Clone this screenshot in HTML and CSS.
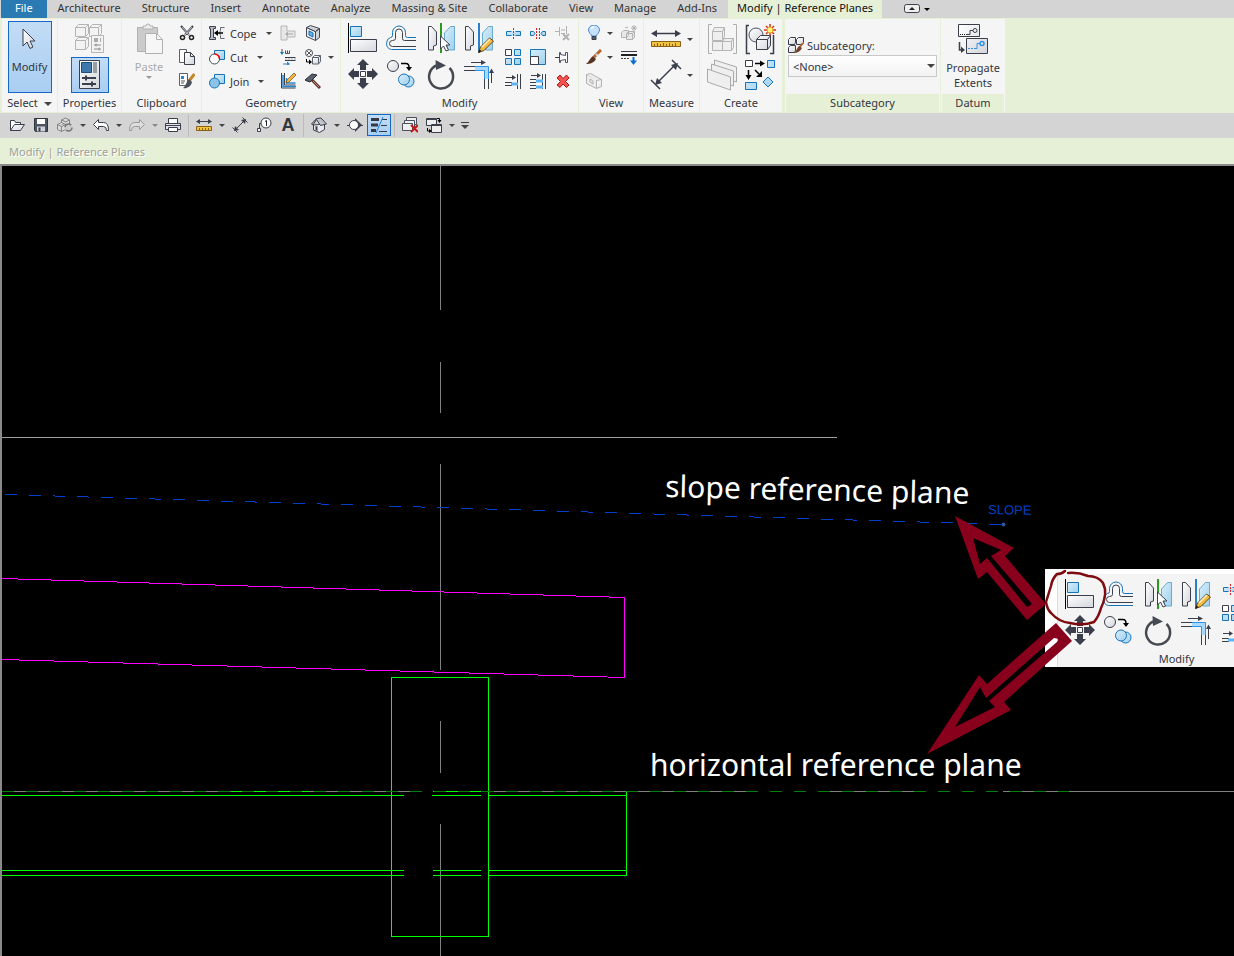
FILE: index.html
```
<!DOCTYPE html>
<html lang="en">
<head>
<meta charset="utf-8">
<title>Modify | Reference Planes</title>
<link rel="stylesheet" href="styles.css">
</head>
<body>
<svg class="sprite" aria-hidden="true">
<defs>
<linearGradient id="gl" x1="0" y1="0" x2="1" y2="1"><stop offset="0" stop-color="#fff"/><stop offset="1" stop-color="#d3d6dc"/></linearGradient>
<linearGradient id="gb" x1="0" y1="0" x2="1" y2="1"><stop offset="0" stop-color="#d9effa"/><stop offset="1" stop-color="#9fd0ee"/></linearGradient>
<symbol id="cursor" viewBox="0 0 32 32"><path d="M9 6v17l4-4 3 6.500 3-1.500-3-6h5z" fill="url(#gl)" stroke="#3a3f4b" stroke-linejoin="round"/></symbol>
<symbol id="types" viewBox="0 0 32 32"><g fill="#f3f3f3" stroke="#b4b4b4"><path d="M1.500 4.500l3-3h10v9l-3 3h-10zM1.500 4.500h10v9m0-9l3-3"/><path d="M15.500 4.500l3-3h9v9l-3 3h-9zM15.500 4.500h9v9m0-9l3-3"/><path d="M1.500 17.500l3-3h10v9l-3 3h-10zM1.500 17.500h10v9m0-9l3-3"/><path d="M17.500 12.500h12v17h-12z"/><path d="M20 22h7m-7 4h7M22 20.500v3m3 1v3" fill="none" stroke="#8c8c8c"/></g><path d="M20 15h4v4h-4zM26 15h1v4h-1z" fill="#aaa"/></symbol>
<symbol id="props" viewBox="0 0 32 32"><path d="M5.500 1.500h20v28h-20z" fill="url(#gl)" stroke="#3a3f4b"/><path d="M7.500 3.500h10v10h-10z" fill="#3f78ad" stroke="#1f4e7d"/><path d="M19 3h4v11h-4z" fill="#9a9da3"/><path d="M8 19h14M8 25h14M12 16.500v5M18 22.500v5" fill="none" stroke="#3a3f4b" stroke-width="2"/></symbol>
<symbol id="paste" viewBox="0 0 32 32"><path d="M4.500 4.500h20v24h-20z" fill="#cbcbcb" stroke="#b0b0b0"/><path d="M10 6V3h3q0-2 2-2t2 2h3v3z" fill="#eee" stroke="#b0b0b0"/><path d="M12.500 10.500h11l6 6v14h-17z" fill="#f6f6f6" stroke="#b0b0b0"/><path d="M23.500 10.500v6h6" fill="none" stroke="#b0b0b0"/></symbol>
<symbol id="cutclip" viewBox="0 0 16 16"><path d="M2 1l8 9M14 1l-8 9" fill="none" stroke="#3a3f4b" stroke-width="2"/><path d="M3 2l7 8M13 2l-7 8" stroke="#fff" stroke-width=".7"/><circle cx="3.500" cy="12.500" r="2" fill="none" stroke="#222" stroke-width="1.500"/><circle cx="12.500" cy="12.500" r="2" fill="none" stroke="#222" stroke-width="1.500"/></symbol>
<symbol id="copyclip" viewBox="0 0 16 16"><path d="M.5.5h7v13h-7z" fill="#fff" stroke="#5b616d"/><path d="M5.500 3.500h6l4 4v8h-10z" fill="url(#gl)" stroke="#3a3f4b"/><path d="M11.500 3.500v4h4" fill="none" stroke="#3a3f4b"/></symbol>
<symbol id="match" viewBox="0 0 16 16"><path d="M.5.500h8v12h-8z" fill="#fff" stroke="#5b616d"/><path d="M2 3h3v3H2z" fill="#2a83cf"/><path d="M2 8h4M2 10h3" stroke="#555"/><path d="M15.500 1L10 8" stroke="#c5862c" stroke-width="3"/><path d="M10 6l3 3c-1 5-6 7-9 6 3-2 3-6 6-9z" fill="#4a5060"/></symbol>
<symbol id="cope" viewBox="0 0 16 16"><path d="M.5 1.500h6v2h-2v9h2v2h-6v-2h1v-9h-1z" fill="#b9bdc6" stroke="#3a3f4b"/><path d="M15.500 2.500h-4v3q-2 2.500 0 5v3h4" fill="#eee" stroke="#666b76"/><path d="M14 8H7" stroke="#000" stroke-width="1.500"/><path d="M5 8l4-3v6z"/></symbol>
<symbol id="cutgeo" viewBox="0 0 16 16"><path d="M5.500 1.500h10v9h-10z" fill="url(#gb)" stroke="#1673b8"/><circle cx="5.500" cy="10" r="5" fill="#fff" stroke="#444955"/><path d="M5.500 5a5 5 0 0 1 5 5" fill="none" stroke="#f00" stroke-width="1.500"/></symbol>
<symbol id="joingeo" viewBox="0 0 16 16"><path d="M5.500 1.500h10v9h-10z" fill="url(#gb)" stroke="#1673b8"/><circle cx="5.500" cy="10" r="5" fill="#8ac4e8" stroke="#1673b8"/></symbol>
<symbol id="wallcope" viewBox="0 0 16 16"><path d="M1 1h6v5h8v6H7v3H1z" fill="#e7e7e7" stroke="#b5b5b5"/><path d="M13 9H8" stroke="#aaa"/><path d="M5 9l3-2.500v5z" fill="#aaa"/></symbol>
<symbol id="opening" viewBox="0 0 16 16"><path d="M1.500 2.500l9 4v9l-9-4z" fill="#e6e8ec" stroke="#444955"/><path d="M1.500 2.500l4-2 9 3-4 3zM10.500 6.500l4-3v9l-4 3z" fill="#cfd2d8" stroke="#444955"/><path d="M4 6l4 2v4l-4-2z" fill="#65b4e8" stroke="#1673b8"/></symbol>
<symbol id="walljoin" viewBox="0 0 16 16"><path d="M2 0v4M5.500 1.500v3h2v-3m0 3h2v-3" fill="none" stroke="#444955"/><path d="M0 3h4L2 6z" fill="#1673b8"/><path d="M5 8.500h10.500M5 11.500h10.500" stroke="#3a3f4b"/><path d="M5 10h11" stroke="#aaa" stroke-dasharray="2 1"/><path d="M3 15h5" stroke="#2680cc"/><path d="M7 12.500l3 2.500-3 2z" fill="#2680cc"/></symbol>
<symbol id="splitface" viewBox="0 0 16 16"><circle cx="4" cy="4" r="3.500" fill="#fff" stroke="#444955"/><path d="M2 2l4 4M6 2L2 6" stroke="#555"/><path d="M1.500 10v3H5" fill="none" stroke="#000"/><path d="M4 10.500l3 2.500-3 2.500z"/><path d="M7.500 8.500l2-2h6v6l-2 2.500h-6z" fill="url(#gl)" stroke="#5b616d"/><path d="M7.500 8.500h6v6m0-6l2-2" fill="none" stroke="#5b616d"/></symbol>
<symbol id="beamjoin" viewBox="0 0 16 16"><path d="M1.500 0v15h14M4.500 0v12h11" fill="none" stroke="#3a3f4b"/><path d="M3 2v11.500h13M6.500 5v5h9" fill="none" stroke="#2989d0" stroke-width="1.500"/><path d="M6 10l1-3 7-7 2 2-7 7z" fill="#f4b73f" stroke="#6b4a14" stroke-width=".7"/></symbol>
<symbol id="hammer" viewBox="0 0 16 16"><path d="M7 7l8 8" stroke="#67342e" stroke-width="3"/><path d="M8 8l6 6" stroke="#b98a83"/><path d="M0 7l7-6 5 1-7 7-3-1z" fill="#5b616c" stroke="#292d35"/></symbol>
<symbol id="align" viewBox="0 0 32 32"><path d="M2.500 0v30" stroke="#000"/><path d="M4.500 3.500h11v10h-11z" fill="url(#gb)" stroke="#1673b8"/><path d="M4.500 16.500h26v12h-26z" fill="url(#gl)" stroke="#3a3f4b"/></symbol>
<symbol id="offset" viewBox="0 0 32 32"><path d="M31 14.500h-8.500q-2 0-2-2V9.500a6.500 6.500 0 0 0-13 0v3q0 2-2 2-4 1-4 6t5 6H31" fill="#f5f5f5" stroke="#1673b8"/><path d="M31 17.500H19.500q-2 0-2-2v-6a3.500 3.500 0 0 0-7 0v6q0 2-3 2-3 0-3 3t3 3H31" fill="none" stroke="#3a3f4b"/></symbol>
<symbol id="mirrorpick" viewBox="0 0 32 32"><path d="M4.500 3.500h3l5 5.500v13l-3 1v4h-5z" fill="url(#gl)" stroke="#3a3f4b"/><path d="M30.500 3.500h-4l-6 6.500v12l3 1v4h7z" fill="url(#gb)" stroke="#6aa9d0"/><path d="M17 0v30" stroke="#2b9a1e" stroke-width="2"/><path d="M16.500 13v13l3-3 2.500 5 2.500-1-2.500-5h4z" fill="#fff" stroke="#3a3f4b"/></symbol>
<symbol id="mirrordraw" viewBox="0 0 32 32"><path d="M2.500 3.500h3l5 5.500v13l-3 1v4h-5z" fill="url(#gl)" stroke="#3a3f4b"/><path d="M29.500 3.500h-4l-6 6.500v12l3 1v4h7z" fill="url(#gb)" stroke="#6aa9d0"/><path d="M16 0v30" stroke="#2680cc" stroke-width="2"/><path d="M15.500 29.500l2-5.500 9-9 4 3-9.500 9.500z" fill="#f6ba3d" stroke="#5a451e"/><path d="M19 24l8-8" stroke="#fff2c8" stroke-width="1.500"/><path d="M15.500 29.500l1-3 2 1.500z" fill="#111"/></symbol>
<symbol id="move" viewBox="0 0 32 32"><path d="M17 0l6 6h-3v5h-6V6h-3zM17 30l6-6h-3v-5h-6v5h-3zM2 15l6-6v3h5v6H8v3zM32 15l-6-6v3h-5v6h5v3z" fill="#3a3f4b"/><path d="M14.500 12.500h5v5h-5z" fill="#fff" stroke="#3a3f4b"/></symbol>
<symbol id="copy" viewBox="0 0 32 32"><circle cx="8" cy="7" r="5.500" fill="url(#gl)" stroke="#3a3f4b"/><path d="M16 4.500h5q3 0 3 4" fill="none" stroke="#000" stroke-width="1.500"/><path d="M21 8h6l-3 4z"/><circle cx="23.500" cy="22.500" r="5.500" fill="url(#gb)" stroke="#1673b8"/><circle cx="19" cy="20.500" r="5.500" fill="url(#gb)" stroke="#1673b8"/></symbol>
<symbol id="rotate" viewBox="0 0 32 32"><path d="M25.500 9a12 12 0 1 1-13-2.500" fill="none" stroke="#454a52" stroke-width="2.500"/><path d="M11.500 1L22 6.500 12 11z" fill="#454a52"/></symbol>
<symbol id="trim" viewBox="0 0 32 32"><path d="M8 3.500h11M28.500 24V13M1 7.500h11M1 11.500h11M21.500 19v11M25.500 19v11" stroke="#3a3f4b"/><path d="M18 1l5 2.500L18 6zM26 14l2.500-4.500L31 14z" fill="#3a3f4b"/><path d="M12 9.500h11.500V20" fill="none" stroke="#a9dafd" stroke-width="4"/><path d="M12 7.500h13.500V20M12 11.500h9.500V20" fill="none" stroke="#2e93e6"/></symbol>
<symbol id="split" viewBox="0 0 16 16"><path d="M1.500 6.500h14v4h-14z" fill="url(#gb)"/><path d="M6.500 6.500h-5v4h5M10.500 6.500h5v4h-5" fill="none" stroke="#1673b8"/><path d="M8.500 3v12" stroke="#d22" stroke-dasharray="2 1"/></symbol>
<symbol id="splitgap" viewBox="0 0 16 16"><path d="M.5 6.500h3l1.500 2-1.500 2h-3zM15.500 6.500h-3l-1.500 2 1.500 2h3z" fill="url(#gb)" stroke="#1673b8"/><path d="M6.500 3v12M9.500 3v12" stroke="#d22" stroke-dasharray="2 1"/></symbol>
<symbol id="unpin" viewBox="0 0 16 16"><path d="M0 6.500h4M4.500 2v9M6 5h4M6 8.500h4M11.500 1v8" fill="none" stroke="#b3b3b3"/><path d="M8 9l6 6m0-6l-6 6" stroke="#b3b3b3" stroke-width="2"/></symbol>
<symbol id="array" viewBox="0 0 16 16"><path d="M.5.500h6v6h-6z" fill="#fff" stroke="#3a3f4b"/><path d="M9.500.500h6v6h-6zM.5 9.500h6v6h-6zM9.500 9.500h6v6h-6z" fill="url(#gb)" stroke="#1673b8"/></symbol>
<symbol id="scale" viewBox="0 0 16 16"><path d="M.5.500h15v15H.5z" fill="url(#gb)" stroke="#1673b8"/><path d="M.5 7.500h8v8h-8z" fill="#fff" stroke="#3a3f4b"/></symbol>
<symbol id="pin" viewBox="0 0 16 16"><path d="M0 8.500h5" stroke="#3a3f4b"/><path d="M4.500 3.500h1v2l5 1v-3h2v10h-2v-3l-5 1v2h-1z" fill="#fff" stroke="#4b505b"/></symbol>
<symbol id="extend1" viewBox="0 0 16 16"><path d="M1 4.500h7" stroke="#3a3f4b"/><path d="M7 2l4 2.500L7 7z" fill="#3a3f4b"/><path d="M0 9.500h7M0 12.500h7M12.500 1v15M15.500 1v15" stroke="#3a3f4b"/><path d="M6 11h7" stroke="#5db4f4" stroke-width="3"/></symbol>
<symbol id="extend2" viewBox="0 0 16 16"><path d="M1 2.500h7M0 6.500h6M0 9.500h6M0 12.500h6M0 15.500h6M12.500 1v15M15.500 1v15" stroke="#3a3f4b"/><path d="M7 0l4 2.500L7 5z" fill="#3a3f4b"/><path d="M6 8h7M6 14h7" stroke="#5db4f4" stroke-width="3"/></symbol>
<symbol id="delete" viewBox="0 0 16 16"><path d="M2 5l3-3 3 3.500L11.500 2 14 5l-3.500 3.500L14 12l-2.500 2.500L8 11l-3 3.500L2 12l3.500-3.500z" fill="#f0564f" stroke="#b01515"/></symbol>
<symbol id="bulb" viewBox="0 0 16 16"><path d="M5.500 11c0-2-3-3-3-6a5.500 5 0 0 1 11 0c0 3-3 4-3 6z" fill="#c5e2fa" stroke="#4c8ccb"/><path d="M6 11.500h4v3H6z" fill="#555b66" stroke="#3a3f4b"/><path d="M5 4q1-2 3-2" fill="none" stroke="#fff" stroke-width="1.500"/></symbol>
<symbol id="displace" viewBox="0 0 16 16"><path d="M.5 7.500l2-2h5v5l-2 2h-5zM5.500 8.500l2-2h6v6l-2 2h-6z" fill="#e8e8e8" stroke="#b2b2b2"/><path d="M5.500 8.500h6v6m0-6l2-2" fill="none" stroke="#b2b2b2"/><path d="M10 3h6M13 0v6M11 1l4 4m0-4l-4 4M4 3l3-1" stroke="#b2b2b2"/></symbol>
<symbol id="brush" viewBox="0 0 16 16"><path d="M15 1L8 8" stroke="#b5652b" stroke-width="3"/><path d="M10 5l2 2" stroke="#ddd" stroke-width="2"/><path d="M7 7l3 3c-2 4-6 5-10 5 3-2 4-6 7-8z" fill="#5a3320"/></symbol>
<symbol id="linework" viewBox="0 0 16 16"><path d="M0 2.500h16" stroke="#3a3f4b"/><path d="M0 6h16" stroke="#222" stroke-width="2"/><path d="M0 9.500h9" stroke="#3a3f4b" stroke-dasharray="2 1"/><path d="M12.500 8v5" stroke="#0a6fd0" stroke-width="2"/><path d="M9 11.500h7L12.500 16z" fill="#0a6fd0"/></symbol>
<symbol id="cutprofile" viewBox="0 0 16 16"><path d="M.5 1.500l10 5v9l-10-5z" fill="#ececec" stroke="#b2b2b2"/><path d="M.5 1.500l4-1 11 6-5 1M15.500 6.500v7l-5 2M4 6l3 2v3l-3-2z" fill="#ececec" stroke="#b2b2b2"/></symbol>
<symbol id="measure" viewBox="0 0 32 32"><path d="M4 10.500h24" stroke="#3a3f4b" stroke-width="1.500"/><path d="M1 10.500L7 7v7zM31 10.500L25 7v7z" fill="#3a3f4b"/><path d="M1.500 18.500h29v5h-29z" fill="#f2c33c" stroke="#8a5f16"/><path d="M4.500 21v2m3-3v3m3-2v2m3-3v3m3-2v2m3-3v3m3-2v2m3-3v3" stroke="#8a5f16"/></symbol>
<symbol id="dimension" viewBox="0 0 32 32"><path d="M7 24L26 5M1 21l9 9M22 1l9 9" stroke="#3a3f4b" stroke-width="1.500"/><path d="M5 26l2-7 5 5zM28 4l-7 2 5 5z" fill="#3a3f4b"/></symbol>
<symbol id="qdimension" viewBox="0 0 16 16"><path d="M3 13L13 3M.5 10.500l5 5M10.500.500l5 5" stroke="#3a3f4b"/><path d="M2 14l1-5 4 4zM14 2L9 3l4 4z" fill="#3a3f4b"/></symbol>
<symbol id="assembly" viewBox="0 0 32 32"><path d="M6 1.500H2.500v29H6M27 1.500h3.500v29H27" fill="none" stroke="#aeaeae"/><g fill="#efefef" stroke="#b5b5b5"><path d="M6.500 8.500l2-4h10v9l-2 4h-10zM6.500 8.500h10v8m0-8l2-4"/><path d="M6.500 18.500h10v9h-10z"/><path d="M16.500 18.500l2-3h9v9l-2 3h-9zM16.500 18.500h9v9m0-9l2-3"/></g></symbol>
<symbol id="group" viewBox="0 0 32 32"><path d="M5 2.500H2.500v28H6M26 30.500h3.500V12" fill="none" stroke="#3a3f4b" stroke-width="1.500"/><circle cx="12" cy="12" r="7" fill="url(#gl)" stroke="#4d535f"/><path d="M12.500 16.500l4-4h10v10l-3 4h-11z" fill="url(#gl)" stroke="#3a3f4b"/><path d="M12.500 16.500h11v10m0-10l3-4" fill="none" stroke="#3a3f4b"/><path d="M26 1v12M20 7h12M22 3l8 8M30 3l-8 8" stroke="#d8301c" stroke-width="1.500"/><circle cx="26" cy="7" r="3" fill="#fff57b" stroke="#f29c22"/></symbol>
<symbol id="parts" viewBox="0 0 32 32"><g fill="#efefef" stroke="#aaa"><path d="M8.500 1l22 7v15l-22-7z"/><path d="M5.500 5l22 7v15l-22-7z"/><path d="M1.500 10l23 8v13l-23-8z"/></g></symbol>
<symbol id="similar" viewBox="0 0 32 32"><path d="M1.500 1.500h7v6h-7z" fill="#fff" stroke="#3a3f4b"/><path d="M23.500 1.500h7v7h-7zM1.500 23.500h11v7h-11zM24 18l5 5-5 5-5-5z" fill="url(#gb)" stroke="#1673b8"/><path d="M11 4.500h6M4.500 11v6M11 11l4 4" stroke="#000" stroke-width="1.500"/><path d="M16 1.500l5 3-5 3zM1.500 16h6l-3 5zM18 12v6h-6z"/></symbol>
<symbol id="subcat" viewBox="0 0 16 16"><g fill="url(#gl)" stroke="#3a3f4b"><path d="M.5 2.500l2-2h5v5l-1 2h-6z"/><path d="M8.500 2.500l2-2h5v5l-1 2h-6z"/><path d="M.5 10.500l2-2h5v5l-1 2h-6z"/></g><path d="M15 6l-4 5" stroke="#b5652b" stroke-width="2"/><path d="M11 9l3 2c-2 4-5 5-9 5 3-1 4-5 6-7z" fill="#74422a"/></symbol>
<symbol id="propagate" viewBox="0 0 32 32"><path d="M1.500.500h21v12h-21zM9.500 14.500h21v15h-21z" fill="url(#gl)" stroke="#3a3f4b"/><path d="M3 10.500h6" stroke="#222" stroke-dasharray="1 1"/><path d="M9 10.500h4v-4h3" fill="none" stroke="#3a3f4b"/><circle cx="18" cy="6.500" r="2" fill="none" stroke="#3a3f4b"/><path d="M11 24.500h7" stroke="#2e93e6" stroke-dasharray="2 1"/><path d="M18 24.500h2v-5h3" fill="none" stroke="#2e93e6"/><circle cx="25" cy="19.500" r="2" fill="none" stroke="#2e93e6" stroke-width="1.500"/><path d="M2.500 18v8H6" fill="none" stroke="#3a3f4b" stroke-width="1.500"/><path d="M4 22.500l4 3.500-4 3z" fill="#3a3f4b"/></symbol>
<symbol id="open" viewBox="0 0 16 16"><path d="M1.500 13.500v-10h4l1 2h5v3" fill="#fff" stroke="#3a3f4b"/><path d="M1.500 13.500l4-6h10l-4 6z" fill="url(#gl)" stroke="#3a3f4b"/></symbol>
<symbol id="save" viewBox="0 0 16 16"><path d="M1.500 1.500h13v13h-12l-1-1z" fill="#4f5663" stroke="#2f3541"/><path d="M4 2h8v5H4z" fill="#fff"/><path d="M4 9.500h8v5H4z" fill="#cfd2d8"/><path d="M5.500 10.500h2v4h-2z" fill="#3a3f4b"/></symbol>
<symbol id="sync" viewBox="0 0 16 16"><g fill="#dadada" stroke="#858585"><path d="M4.500 3l4-2 4 2v4l-4 2-4-2zM4.500 3l4 2 4-2"/><path d="M.5 7.500l4-2 4 2v5l-4 2-4-2zM.5 7.500l4 2 4-2m-4 2v5"/></g><circle cx="11.500" cy="10.500" r="3.500" fill="#ccc" stroke="#777" stroke-width="1.500" stroke-dasharray="8 3"/></symbol>
<symbol id="undo" viewBox="0 0 16 16"><path d="M.5 7.500l5-5v3h5q5 0 5 8h-2q0-4-3-4h-5v3z" fill="#fff" stroke="#3a3f4b"/></symbol>
<symbol id="redo" viewBox="0 0 16 16"><path d="M15.500 7.500l-5-5v3h-5q-5 0-5 8h2q0-4 3-4h5v3z" fill="#ddd" stroke="#999"/></symbol>
<symbol id="print" viewBox="0 0 16 16"><path d="M3.500 6V1.500h9V6" fill="#fff" stroke="#3a3f4b"/><path d="M.5 6.500h15v6H.5z" fill="#e3e5e9" stroke="#3a3f4b"/><path d="M3.500 10.500h9v4h-9z" fill="#fff" stroke="#3a3f4b"/><path d="M1 8.500h14" stroke="#3a3f4b"/></symbol>
<symbol id="qmeasure" viewBox="0 0 16 16"><path d="M2 4.500h12" stroke="#3a3f4b"/><path d="M0 4.500L4 2v5zM16 4.500L12 2v5z" fill="#3a3f4b"/><path d="M.5 9.500h15v4H.5z" fill="#f2c33c" stroke="#8a5f16"/><path d="M3.500 11v2m3-2v2m3-2v2m3-2v2" stroke="#8a5f16"/></symbol>
<symbol id="tag" viewBox="0 0 16 16"><circle cx="10" cy="6" r="5" fill="#fff" stroke="#3a3f4b"/><path d="M5 6.500H3.500v6" fill="none" stroke="#3a3f4b"/><path d="M1.500 11.500h3v3h-3z" fill="#fff" stroke="#3a3f4b"/><path d="M9 4.500l1.500-1V9" fill="none" stroke="#222"/></symbol>
<symbol id="house" viewBox="0 0 16 16"><path d="M2.500 8v5l6 2.500 5-3V7z" fill="#e8eaed" stroke="#3a3f4b"/><path d="M.5 7l5-5.500L10 1l5.500 6-6 1.500-4-6L2 8z" fill="#bfc4cc" stroke="#3a3f4b"/><path d="M4.500 9l2 .500v4.500l-2-1z" fill="#3a3f4b"/></symbol>
<symbol id="section" viewBox="0 0 16 16"><path d="M8 1l7 7-7 7z" fill="#3a3f4b"/><circle cx="7" cy="8" r="4.500" fill="#fff" stroke="#3a3f4b"/><path d="M0 8.500h2M14 8.500h2" stroke="#3a3f4b"/></symbol>
<symbol id="thin" viewBox="0 0 16 16"><path d="M0 2.500h8M0 8h7M0 13.500h5" stroke="#343a45" stroke-width="3"/><path d="M11 2.500h5M10 8.500h6M8 14.500h8" stroke="#343a45"/><path d="M12 0L5 16" stroke="#1683e8"/></symbol>
<symbol id="closewin" viewBox="0 0 16 16"><g fill="#eee" stroke="#4a505c"><path d="M4.500.500h10v7h-10z"/><path d="M2.500 3.500h10v7h-10z"/><path d="M.5 6.500h10v7H.5z"/></g><path d="M9 8l7 7m0-7l-7 7" stroke="#c71515" stroke-width="2"/></symbol>
<symbol id="switchwin" viewBox="0 0 16 16"><path d="M.5 1.500h10v7H.5zM5.500 7.500h10v8h-10z" fill="#eee" stroke="#3a3f4b"/><path d="M.5 2.500h10M5.500 8.500h10" stroke="#3a3f4b"/><path d="M11 1.500h2.500V4M1.500 11v3H4" fill="none" stroke="#000"/><path d="M11.500 3h4l-2 3zM3 12l3 2-3 2z"/></symbol>
<symbol id="minimize" viewBox="0 0 16 10"><rect x=".5" y=".5" width="15" height="8" rx="2" fill="#eee" stroke="#3a3f4b"/><path d="M5 6l3-3 3 3z" fill="#222"/></symbol>
</defs>
</svg>

<div class="app">
<nav class="tabs" aria-label="Ribbon tabs">
<a class="tab tab-file" href="#file">File</a>
<a class="tab" href="#architecture">Architecture</a>
<a class="tab" href="#structure">Structure</a>
<a class="tab" href="#insert">Insert</a>
<a class="tab" href="#annotate">Annotate</a>
<a class="tab" href="#analyze">Analyze</a>
<a class="tab" href="#massing">Massing &amp; Site</a>
<a class="tab" href="#collaborate">Collaborate</a>
<a class="tab" href="#view">View</a>
<a class="tab" href="#manage">Manage</a>
<a class="tab" href="#addins">Add-Ins</a>
<a class="tab tab-active" href="#modify" aria-current="page">Modify | Reference Planes</a>
<button class="tab-min" aria-label="Minimize ribbon"><svg><use href="#minimize"/></svg><i class="caret dark"></i></button>
</nav>

<div class="ribbon">
<section class="panel">
<div class="body center"><button class="big on"><svg class="l"><use href="#cursor"/></svg>Modify</button></div>
<h2>Select <i class="caret wide"></i></h2>
</section>
<section class="panel">
<div class="body large-grid one"><button aria-label="Type properties" disabled><svg class="l"><use href="#types"/></svg></button><button class="on" aria-label="Properties palette"><svg class="l"><use href="#props"/></svg></button></div>
<h2>Properties</h2>
</section>
<section class="panel">
<div class="body clipboard"><button class="big" disabled><svg class="l"><use href="#paste"/></svg>Paste<i class="caret"></i></button>
<div class="small-grid one"><button aria-label="Cut to clipboard"><svg class="s"><use href="#cutclip"/></svg></button><button aria-label="Copy to clipboard"><svg class="s"><use href="#copyclip"/></svg></button><button aria-label="Match type"><svg class="s"><use href="#match"/></svg></button></div></div>
<h2>Clipboard</h2>
</section>
<section class="panel">
<div class="body geometry">
<div class="stack"><button><svg class="s"><use href="#cope"/></svg>Cope<i class="caret"></i></button><button><svg class="s"><use href="#cutgeo"/></svg>Cut<i class="caret"></i></button><button><svg class="s"><use href="#joingeo"/></svg>Join<i class="caret"></i></button></div>
<div class="small-grid two"><button aria-label="Uncope" disabled><svg class="s"><use href="#wallcope"/></svg></button><button aria-label="Opening"><svg class="s"><use href="#opening"/></svg></button><button aria-label="Wall joins"><svg class="s"><use href="#walljoin"/></svg></button><button aria-label="Split face"><svg class="s"><use href="#splitface"/></svg></button><button aria-label="Beam joins"><svg class="s"><use href="#beamjoin"/></svg></button><button aria-label="Demolish"><svg class="s"><use href="#hammer"/></svg></button></div>
<button class="drop" aria-label="More face tools"><i class="caret"></i></button>
</div>
<h2>Geometry</h2>
</section>
<section class="panel">
<div class="body tools">
<div class="large-grid four"><button aria-label="Align"><svg class="l"><use href="#align"/></svg></button><button aria-label="Offset"><svg class="l"><use href="#offset"/></svg></button><button aria-label="Mirror, pick axis"><svg class="l"><use href="#mirrorpick"/></svg></button><button aria-label="Mirror, draw axis"><svg class="l"><use href="#mirrordraw"/></svg></button><button aria-label="Move"><svg class="l"><use href="#move"/></svg></button><button aria-label="Copy"><svg class="l"><use href="#copy"/></svg></button><button aria-label="Rotate"><svg class="l"><use href="#rotate"/></svg></button><button aria-label="Trim to corner"><svg class="l"><use href="#trim"/></svg></button></div>
<div class="small-grid three"><button aria-label="Split element"><svg class="s"><use href="#split"/></svg></button><button aria-label="Split with gap"><svg class="s"><use href="#splitgap"/></svg></button><button aria-label="Unpin" disabled><svg class="s"><use href="#unpin"/></svg></button><button aria-label="Array"><svg class="s"><use href="#array"/></svg></button><button aria-label="Scale"><svg class="s"><use href="#scale"/></svg></button><button aria-label="Pin"><svg class="s"><use href="#pin"/></svg></button><button aria-label="Extend single"><svg class="s"><use href="#extend1"/></svg></button><button aria-label="Extend multiple"><svg class="s"><use href="#extend2"/></svg></button><button aria-label="Delete"><svg class="s"><use href="#delete"/></svg></button></div>
</div>
<h2>Modify</h2>
</section>
<section class="panel">
<div class="body view-tools">
<button class="pair" aria-label="Hide in view"><svg class="s"><use href="#bulb"/></svg><i class="caret"></i></button><button aria-label="Displace" disabled><svg class="s"><use href="#displace"/></svg></button>
<button class="pair" aria-label="Override graphics"><svg class="s"><use href="#brush"/></svg><i class="caret"></i></button><button aria-label="Linework"><svg class="s"><use href="#linework"/></svg></button>
<button class="pair" aria-label="Cut profile" disabled><svg class="s"><use href="#cutprofile"/></svg></button>
</div>
<h2>View</h2>
</section>
<section class="panel">
<div class="body large-grid wide-one"><button class="pair" aria-label="Measure"><svg class="l"><use href="#measure"/></svg><i class="caret"></i></button><button class="pair" aria-label="Dimension"><svg class="l"><use href="#dimension"/></svg><i class="caret"></i></button></div>
<h2>Measure</h2>
</section>
<section class="panel">
<div class="body large-grid two"><button aria-label="Create assembly" disabled><svg class="l"><use href="#assembly"/></svg></button><button aria-label="Create group"><svg class="l"><use href="#group"/></svg></button><button aria-label="Create parts" disabled><svg class="l"><use href="#parts"/></svg></button><button aria-label="Create similar"><svg class="l"><use href="#similar"/></svg></button></div>
<h2>Create</h2>
</section>
<section class="panel context">
<div class="body subcategory"><label for="subcategory"><svg class="s"><use href="#subcat"/></svg>Subcategory:</label>
<div class="select"><select id="subcategory"><option>&lt;None&gt;</option></select><i class="caret wide"></i></div></div>
<h2>Subcategory</h2>
</section>
<section class="panel context">
<div class="body center"><button class="big"><svg class="l"><use href="#propagate"/></svg>Propagate<br>Extents</button></div>
<h2>Datum</h2>
</section>
</div>

<div class="quick" role="toolbar" aria-label="Quick access">
<button aria-label="Open"><svg class="s"><use href="#open"/></svg></button>
<button aria-label="Save"><svg class="s"><use href="#save"/></svg></button>
<button aria-label="Synchronize" disabled><svg class="s"><use href="#sync"/></svg></button>
<button class="drop" aria-label="Synchronize options"><i class="caret"></i></button>
<button aria-label="Undo"><svg class="s"><use href="#undo"/></svg></button>
<button class="drop" aria-label="Undo list"><i class="caret"></i></button>
<button aria-label="Redo" disabled><svg class="s"><use href="#redo"/></svg></button>
<button class="drop" aria-label="Redo list" disabled><i class="caret"></i></button>
<button aria-label="Print"><svg class="s"><use href="#print"/></svg></button>
<span class="rule"></span>
<button aria-label="Measure"><svg class="s"><use href="#qmeasure"/></svg></button>
<button class="drop" aria-label="Measure options"><i class="caret"></i></button>
<button aria-label="Aligned dimension"><svg class="s"><use href="#qdimension"/></svg></button>
<button aria-label="Tag by category"><svg class="s"><use href="#tag"/></svg></button>
<button class="text-tool">A</button>
<span class="rule"></span>
<button aria-label="Default 3D view"><svg class="s"><use href="#house"/></svg></button>
<button class="drop" aria-label="3D view options"><i class="caret"></i></button>
<button aria-label="Section"><svg class="s"><use href="#section"/></svg></button>
<button class="on" aria-label="Thin lines"><svg class="s"><use href="#thin"/></svg></button>
<span class="rule"></span>
<button aria-label="Close inactive views"><svg class="s"><use href="#closewin"/></svg></button>
<button aria-label="Switch windows"><svg class="s"><use href="#switchwin"/></svg></button>
<button class="drop" aria-label="Window list"><i class="caret"></i></button>
<button class="customize" aria-label="Customize toolbar"><i class="caret wide"></i></button>
</div>
<div class="options">Modify | Reference Planes</div>

<main class="canvas">
<svg class="drawing" viewBox="2 166 1232 790" role="img" aria-label="Section view with reference planes">
<g fill="none" shape-rendering="crispEdges">
<path d="M440.500 166v144M440.500 362v51M440.500 464v206M440.500 721v52M440.500 824v132" stroke="#808080"/>
<path d="M2 437.500h835" stroke="#a0a0a0"/>
<path d="M5 494.500L1003 524.500" stroke="#0040c8" stroke-dasharray="12 12"/>
<path d="M2 578.500L624.500 597.500V677.500L2 659.500" stroke="#f0f"/>
<path d="M391.500 677.500h97v259h-97zM2 795.500h402M432 795.500h49M489 795.500h137M2 870.500h402M433 870.500h48M489 870.500h137M2 875.500h402M433 875.500h48M489 875.500h137.500V792" stroke="#0f0"/>
<path d="M2 791.500h420M482 791.500h275M829 791.500h97M1003 791.500h231" stroke="#808080"/>
<path d="M232 791.500h78M433 791.500h48" stroke="#0f0"/>
<path d="M2 791.500h420M434 791.500h47M482 791.500h587" stroke="#008000" stroke-dasharray="12 12"/>
</g>
<circle cx="1003.500" cy="524.500" r="2" fill="#2a5a9a"/>
<text class="plane-name" x="988" y="514" transform="rotate(1 988 514)">SLOPE</text>
<text class="note" x="665" y="497" transform="rotate(1.300 665 497)">slope reference plane</text>
<text class="note" x="650" y="776">horizontal reference plane</text>
</svg>
<section class="inset">
<div class="inset-panel">
<div class="tools">
<div class="large-grid four"><button aria-label="Align"><svg class="l"><use href="#align"/></svg></button><button aria-label="Offset"><svg class="l"><use href="#offset"/></svg></button><button aria-label="Mirror, pick axis"><svg class="l"><use href="#mirrorpick"/></svg></button><button aria-label="Mirror, draw axis"><svg class="l"><use href="#mirrordraw"/></svg></button><button aria-label="Move"><svg class="l"><use href="#move"/></svg></button><button aria-label="Copy"><svg class="l"><use href="#copy"/></svg></button><button aria-label="Rotate"><svg class="l"><use href="#rotate"/></svg></button><button aria-label="Trim to corner"><svg class="l"><use href="#trim"/></svg></button></div>
<div class="small-grid one"><button aria-label="Split element"><svg class="s"><use href="#split"/></svg></button><button aria-label="Array"><svg class="s"><use href="#array"/></svg></button><button aria-label="Extend single"><svg class="s"><use href="#extend1"/></svg></button></div>
</div>
<h2>Modify</h2>
</div>
</section>
<svg class="markup" viewBox="2 166 1232 790" aria-hidden="true">
<path fill="#88001b" fill-rule="evenodd" d="M955 516L1014 548 1005 556 1046 604 1027 620 987 572 978 579zM973 538L1001 550 991 556 1032 604 1027 607 987 558 980 564z"/>
<path fill="#88001b" fill-rule="evenodd" d="M927 754L979 675 987 684 1056 623 1072 641 1004 702 1011 710zM955 727L980 687 986 698 1054 638Q1060 638 1057 642L989 701 995 707z"/>
<path fill="none" stroke="#7d0b10" stroke-width="2.500" stroke-linecap="round" stroke-linejoin="round" d="M1065 571Q1062 574 1057 574 1052 579 1051 586L1046 602Q1047 609 1051 613 1059 622 1070 623 1083 626 1094 622 1099 616 1101 608 1106 598 1105 589L1103 583Q1098 576 1088 576 1078 572 1068 573"/>
</svg>
</main>
</div>
</body>
</html>
```
FILE: styles.css
```
* { box-sizing: border-box; }
body { margin: 0; background: #000; }
body, button, select { font-family: "Noto Sans", "Open Sans", sans-serif; font-size: 11px; line-height: 15px; color: #33363d; }
button { padding: 0; border: 1px solid transparent; background: none; display: flex; align-items: center; justify-content: center; }
button:disabled { color: #aaa; }
h2 { margin: 0; font-size: 11px; font-weight: 400; line-height: 18px; height: 18px; text-align: center; white-space: nowrap; }
svg { display: block; flex: none; }
.sprite { position: absolute; width: 0; height: 0; }
.l { width: 32px; height: 32px; }
.s { width: 16px; height: 16px; }
.on { background: linear-gradient(#c3dcf5, #a9cef2); border-color: #1468c8; }
.caret { display: inline-block; flex: none; border: 3px solid transparent; border-top-color: #444; border-bottom: 0; }
.caret.wide { border-width: 4px 4px 0; vertical-align: middle; }
.caret.dark { border-top-color: #000; }
h2 .caret { margin-left: 3px; }

.app { min-height: 100vh; display: flex; flex-direction: column; background: #d4d4d4; }
.tabs { display: flex; gap: 1px; height: 18px; padding-left: 1px; white-space: nowrap; }
.tab { padding: 0 10px; color: #333; text-decoration: none; line-height: 16px; }
.tab-file { padding: 0 14px; background: #2a7ab4; color: #fff; }
.tab-active { padding: 0 9px; background: #e6f0d7; color: #111; }
.tab-min { margin-left: 20px; gap: 4px; }
.tab-min svg { width: 16px; height: 10px; }

.ribbon { display: grid; grid-template-columns: 55px 63px 79px 138px 237px 64px 55px 82px 157px 64px; column-gap: 1px; padding: 1px 0 1px 2px; background: #e6f0d7; }
.panel { background: #f5f5f5; }
.body { height: 75px; padding-top: 2px; }
.context h2 { background: #e6f0d7; border: solid #f5f5f5; border-width: 0 1px; }
.context:nth-of-type(9) { margin-left: 2px; }
.center { display: flex; justify-content: center; }
.big { flex-direction: column; justify-content: flex-start; width: 44px; height: 72px; padding-top: 1px; line-height: 15px; }
.big .l { margin-bottom: 4px; }
.context .big { width: 60px; padding-top: 2px; }
.large-grid { display: grid; grid-auto-rows: 36px; justify-content: center; }
.large-grid.one { grid-template-columns: 38px; }
.large-grid.two { grid-template-columns: 38px 38px; }
.large-grid.four { grid-template-columns: repeat(4, 39px); }
.large-grid.wide-one { grid-template-columns: 54px; }
.small-grid { display: grid; grid-auto-rows: 24px; }
.small-grid.one { grid-template-columns: 25px; }
.small-grid.two { grid-template-columns: 25px 25px; }
.small-grid.three { grid-template-columns: repeat(3, 25px); }
.clipboard { display: flex; padding-left: 5px; gap: 3px; }
.clipboard .caret { margin-top: 2px; border-top-color: #999; }
.geometry { display: flex; padding-left: 6px; }
.stack { display: grid; grid-template-rows: repeat(3, 24px); width: 67px; }
.stack button { justify-content: flex-start; gap: 5px; }
.stack .caret { margin-left: 4px; }
.drop { width: 12px; }
.tools { display: flex; gap: 2px; padding-left: 1px; }
.view-tools { display: grid; grid-template: repeat(3, 24px) / 36px 25px; padding-left: 1px; }
.pair { justify-content: flex-start; gap: 5px; padding-left: 5px; }
.wide-one .pair { padding-left: 4px; }
.subcategory { padding: 18px 3px 0; }
.subcategory label { display: flex; align-items: center; gap: 3px; height: 16px; }
.select { position: relative; margin-top: 2px; }
.select select { width: 100%; height: 22px; padding: 0 4px; appearance: none; border: 1px solid #c8c8c8; border-radius: 0; background: linear-gradient(#fff, #f2f2f2); }
.select .caret { position: absolute; right: 2px; top: 9px; pointer-events: none; }

.quick { display: flex; height: 25px; padding-left: 5px; }
.quick button { width: 24px; height: 24px; }
.quick .drop { width: 12px; }
.quick .on { height: 22px; margin-top: 1px; }
.quick .drop:disabled .caret { border-top-color: #888; }
.quick .customize { width: 14px; flex-direction: column; gap: 2px; }
.customize::before { content: ""; width: 8px; height: 1px; background: #3a3d45; }
.rule { width: 1px; margin: 1px 3px; background: #bbb; }
.quick .text-tool { font: 700 18px "Liberation Sans", sans-serif; }
.options { height: 26px; padding: 6px 9px; background: #e6f0d7; color: #9da199; text-shadow: 1px 1px #fff; white-space: nowrap; }

.canvas { position: relative; flex: 1; border: solid #8a8a8a; border-width: 2px 0 0 2px; background: #000; overflow: hidden; }
.drawing { width: 100%; height: auto; }
.markup { position: absolute; top: 0; left: 0; width: 100%; height: auto; pointer-events: none; }
.note { font: 30px "Noto Sans", sans-serif; fill: #fff; }
.plane-name { font: 13px "Liberation Sans", sans-serif; fill: #0040c8; }
.inset { position: absolute; top: 403px; right: 0; width: 189px; height: 98px; padding: 5px 0 0 12px; background: #fff; overflow: hidden; }
.inset-panel { height: 100%; padding-top: 3px; background: #f4f4f4; border-left: 1px solid #ddd; }
.inset h2 { width: 237px; margin-top: 1px; }
```
